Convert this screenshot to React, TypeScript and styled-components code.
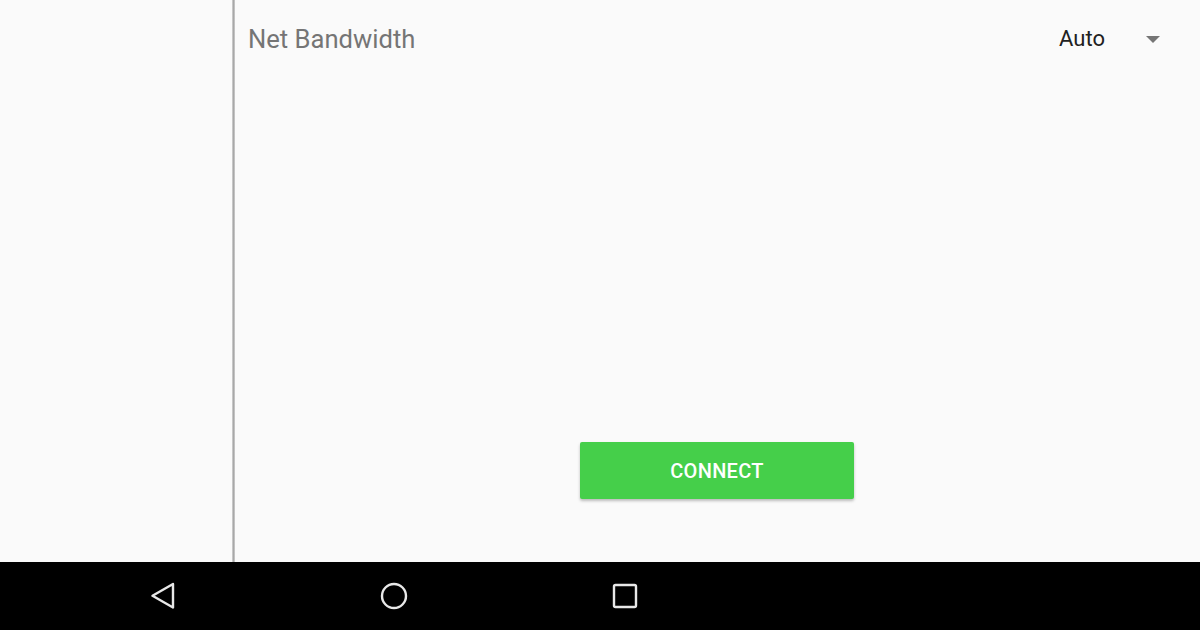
import React from "react";
import styled, { createGlobalStyle } from "styled-components";

const Global = createGlobalStyle`
  html, body, #root {
    margin: 0;
    padding: 0;
    width: 100%;
    height: 100%;
  }
  body {
    font-family: Roboto, "Noto Sans", Arial, sans-serif;
    background: #fafafa;
    overflow: hidden;
  }
`;

const Screen = styled.div`
  display: flex;
  flex-direction: column;
  width: 1200px;
  height: 630px;
`;

const Body = styled.div`
  flex: 1;
  display: flex;
  min-height: 0;
`;

const Sidebar = styled.div`
  width: 232px;
  flex-shrink: 0;
  background: #fafafa;
`;

const Divider = styled.div`
  width: 3px;
  flex-shrink: 0;
  background: linear-gradient(to right, #d6d6d6, #a8a8a8, #d0d0d0);
`;

const Content = styled.div`
  flex: 1;
  display: flex;
  flex-direction: column;
  background: #fafafa;
`;

const SettingRow = styled.div`
  display: flex;
  align-items: center;
  justify-content: space-between;
  height: 77px;
  padding: 0 40px 0 13px;
`;

const Label = styled.div`
  font-size: 25.6px;
  color: #757575;
`;

const Select = styled.div`
  display: flex;
  align-items: center;
  gap: 41px;
  font-size: 22px;
  color: #212121;
`;

const Caret = styled.span`
  width: 0;
  height: 0;
  border-left: 7px solid transparent;
  border-right: 7px solid transparent;
  border-top: 7px solid #757575;
  margin-top: 2px;
`;

const Spacer = styled.div`
  flex: 1;
`;

const ButtonArea = styled.div`
  display: flex;
  justify-content: center;
  padding: 0 1px 63px 0;
`;

const ConnectButton = styled.button`
  width: 274px;
  height: 57px;
  border: none;
  border-radius: 2px;
  background: #45cf4a;
  color: #ffffff;
  font-family: Roboto, Arial, sans-serif;
  font-size: 20px;
  font-weight: 500;
  letter-spacing: 0.3px;
  box-shadow: 0 2px 3px rgba(0, 0, 0, 0.25);
  cursor: pointer;
`;

const NavBar = styled.div`
  height: 68px;
  background: #000;
  display: flex;
  align-items: center;
  padding-left: 147px;
  gap: 199px;
`;

const NavIcon = styled.svg`
  width: 32px;
  height: 32px;
  stroke: #e8e8e8;
  stroke-width: 2.4;
  fill: none;
  stroke-linejoin: round;
`;

export default function App() {
  return (
    <>
      <Global />
      <Screen>
        <Body>
          <Sidebar />
          <Divider />
          <Content>
            <SettingRow>
              <Label>Net Bandwidth</Label>
              <Select>
                Auto
                <Caret />
              </Select>
            </SettingRow>
            <Spacer />
            <ButtonArea>
              <ConnectButton>CONNECT</ConnectButton>
            </ButtonArea>
          </Content>
        </Body>
        <NavBar>
          <NavIcon viewBox="0 0 32 32">
            <path d="M26 4 L5.5 15.8 L26 27.5 Z" />
          </NavIcon>
          <NavIcon viewBox="0 0 32 32">
            <circle cx="16" cy="16" r="12" />
          </NavIcon>
          <NavIcon viewBox="0 0 32 32">
            <rect x="5" y="5" width="22" height="22" rx="1.5" />
          </NavIcon>
        </NavBar>
      </Screen>
    </>
  );
}
